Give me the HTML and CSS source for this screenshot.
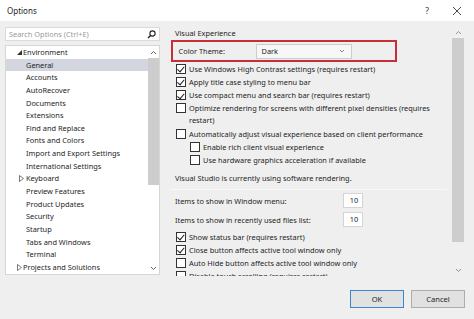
FILE: index.html
```html
<!DOCTYPE html>
<html lang="en">
<head>
    <meta charset="UTF-8">
    <meta name="viewport" content="width=device-width, initial-scale=1.0">
    <title>Options</title>
    <link rel="stylesheet" href="styles.css">
</head>
<body>
    <div class="window">
        <div class="titlebar">
            <span class="title">Options</span>
            <span class="help">?</span>
            <svg class="close" width="10" height="10" viewBox="0 0 10 10"><path d="M1 1 L9 9 M9 1 L1 9" stroke="#333" stroke-width="0.9" fill="none"/></svg>
        </div>

        <div class="main">
            <div class="left">
                <div class="search">
                    <span class="placeholder">Search Options (Ctrl+E)</span>
                    <svg class="search-icon" width="9" height="9" viewBox="0 0 9 9"><circle cx="5.5" cy="3.5" r="2.6" stroke="#222" stroke-width="1.1" fill="none"/><path d="M3.6 5.4 L1 8" stroke="#222" stroke-width="1.4"/></svg>
                </div>

                <div class="tree">
                    <ul class="nodes">
                        <li class="node"><svg class="tri" width="5" height="5" viewBox="0 0 5 5"><path d="M5 0 L5 5 L0 5 Z" fill="#333"/></svg>Environment</li>
                        <li class="leaf selected">General</li>
                        <li class="leaf">Accounts</li>
                        <li class="leaf">AutoRecover</li>
                        <li class="leaf">Documents</li>
                        <li class="leaf">Extensions</li>
                        <li class="leaf">Find and Replace</li>
                        <li class="leaf">Fonts and Colors</li>
                        <li class="leaf">Import and Export Settings</li>
                        <li class="leaf">International Settings</li>
                        <li class="leaf sub"><svg class="tri" width="5" height="7" viewBox="0 0 5 7"><path d="M0.5 0.5 L4.5 3.5 L0.5 6.5 Z" stroke="#555" stroke-width="0.8" fill="none"/></svg>Keyboard</li>
                        <li class="leaf">Preview Features</li>
                        <li class="leaf">Product Updates</li>
                        <li class="leaf">Security</li>
                        <li class="leaf">Startup</li>
                        <li class="leaf">Tabs and Windows</li>
                        <li class="leaf">Terminal</li>
                        <li class="node"><svg class="tri" width="5" height="7" viewBox="0 0 5 7"><path d="M0.5 0.5 L4.5 3.5 L0.5 6.5 Z" stroke="#555" stroke-width="0.8" fill="none"/></svg>Projects and Solutions</li>
                    </ul>
                    <div class="tscroll">
                        <div class="arrow"><svg width="7" height="5" viewBox="0 0 7 5"><path d="M1 4 L3.5 1.5 L6 4" stroke="#666" stroke-width="1" fill="none"/></svg></div>
                        <div class="thumb tree-thumb"></div>
                        <div class="track"></div>
                        <div class="arrow"><svg width="7" height="5" viewBox="0 0 7 5"><path d="M1 1 L3.5 3.5 L6 1" stroke="#666" stroke-width="1" fill="none"/></svg></div>
                    </div>
                </div>
            </div>

            <div class="right">
                <div class="content">
                    <div class="heading">Visual Experience</div>

                    <div class="theme-box">
                        <span class="theme-label">Color Theme:</span>
                        <div class="dropdown">
                            <span>Dark</span>
                            <svg width="6" height="4" viewBox="0 0 6 4"><path d="M1 1 L3 3 L5 1" stroke="#777" stroke-width="0.9" fill="none"/></svg>
                        </div>
                    </div>

                    <div class="check"><span class="box on"></span>Use Windows High Contrast settings (requires restart)</div>
                    <div class="check"><span class="box on"></span>Apply title case styling to menu bar</div>
                    <div class="check"><span class="box on"></span>Use compact menu and search bar (requires restart)</div>
                    <div class="check tall"><span class="box"></span><span>Optimize rendering for screens with different pixel densities (requires restart)</span></div>
                    <div class="check"><span class="box"></span>Automatically adjust visual experience based on client performance</div>
                    <div class="check nested"><span class="box"></span>Enable rich client visual experience</div>
                    <div class="check nested"><span class="box"></span>Use hardware graphics acceleration if available</div>

                    <div class="note">Visual Studio is currently using software rendering.</div>

                    <div class="counts">
                        <div class="count-row"><span>Items to show in Window menu:</span><span class="num">10</span></div>
                        <div class="count-row"><span>Items to show in recently used files list:</span><span class="num">10</span></div>
                    </div>

                    <div class="check"><span class="box on"></span>Show status bar (requires restart)</div>
                    <div class="check"><span class="box on"></span>Close button affects active tool window only</div>
                    <div class="check"><span class="box"></span>Auto Hide button affects active tool window only</div>
                    <div class="check"><span class="box"></span>Disable touch scrolling (requires restart)</div>
                </div>
                <div class="vscroll">
                    <div class="arrow"><svg width="7" height="5" viewBox="0 0 7 5"><path d="M1 4 L3.5 1.5 L6 4" stroke="#888" stroke-width="0.9" fill="none"/></svg></div>
                    <div class="thumb right-thumb"></div>
                    <div class="track"></div>
                    <div class="arrow"><svg width="7" height="5" viewBox="0 0 7 5"><path d="M1 1 L3.5 3.5 L6 1" stroke="#888" stroke-width="0.9" fill="none"/></svg></div>
                </div>
            </div>
        </div>

        <div class="footer">
            <button class="btn primary">OK</button>
            <button class="btn">Cancel</button>
        </div>
    </div>
</body>
</html>
```

FILE: styles.css
```css
body {
    margin: 0;
    font-family: "Noto Sans", "Open Sans", sans-serif;
    font-size: 7.4px;
    color: #1e1e1e;
    background: #efefef;
}

.window {
    width: 474px;
    height: 319px;
    display: flex;
    flex-direction: column;
    background: #efefef;
    overflow: hidden;
}

/* title bar */
.titlebar {
    height: 21px;
    flex: none;
    background: #ffffff;
    display: flex;
    align-items: center;
    padding: 0 12px 0 7px;
}

.title {
    font-size: 8px;
    flex: 1;
    padding-bottom: 1px;
}

.help {
    font-size: 8.5px;
    margin-right: 23px;
    color: #333;
}

/* main area */
.main {
    height: 255px;
    flex: none;
    display: flex;
}

.left {
    width: 155px;
    margin-left: 5px;
    padding-top: 6px;
    display: flex;
    flex-direction: column;
    gap: 4px;
}

.search {
    height: 14px;
    box-sizing: border-box;
    background: #ffffff;
    border: 1px solid #dadada;
    display: flex;
    align-items: center;
    padding: 0 3px 0 3px;
}

.placeholder {
    flex: 1;
    color: #9a9a9a;
}

.tree {
    height: 230px;
    box-sizing: border-box;
    background: #ffffff;
    border: 1px solid #d6d6d6;
    display: flex;
}

.nodes {
    list-style: none;
    margin: 0;
    padding: 0;
    flex: 1;
}

.nodes li {
    height: 12.65px;
    line-height: 12.65px;
    white-space: nowrap;
    display: flex;
    align-items: center;
}

.node {
    padding-left: 11px;
}

.leaf {
    padding-left: 20px;
}

.leaf.sub {
    padding-left: 13px;
}

.tri {
    margin-right: 2px;
}

.node .tri {
    margin-right: 1px;
}

.selected {
    background: #d3d6de;
}

.tscroll {
    width: 11px;
    display: flex;
    flex-direction: column;
}

.arrow {
    height: 12px;
    flex: none;
    display: flex;
    align-items: center;
    justify-content: center;
}

.thumb {
    background: #cdcdcd;
    flex: none;
}

.tree-thumb {
    height: 127px;
}

.track {
    flex: 1;
}

/* right pane */
.right {
    width: 295px;
    margin-left: 10px;
    margin-top: 5px;
    height: 250px;
    display: flex;
}

.content {
    flex: 1;
    overflow: hidden;
}

.heading {
    height: 14px;
    line-height: 14px;
    padding-left: 5px;
}

.theme-box {
    margin-left: 1px;
    width: 226px;
    height: 22px;
    box-sizing: border-box;
    border: 2px solid #c62f38;
    display: flex;
    align-items: center;
    padding-left: 5.5px;
}

.theme-label {
    width: 77px;
}

.dropdown {
    width: 96px;
    height: 15px;
    box-sizing: border-box;
    border: 1px solid #cccccc;
    background: #f7f7f7;
    display: flex;
    align-items: center;
    justify-content: space-between;
    padding: 0 6px 0 5px;
}

.check {
    height: 13.3px;
    display: flex;
    align-items: center;
    padding-left: 6px;
    white-space: nowrap;
}

.check.tall {
    height: 25.3px;
    align-items: flex-start;
    white-space: normal;
    line-height: 12px;
    padding-top: 0.5px;
    box-sizing: border-box;
}

.check.tall .box {
    margin-top: 1px;
}

.check.tall span:last-child {
    width: 255px;
}

.check.nested {
    padding-left: 20px;
}

.box {
    width: 10px;
    height: 10px;
    box-sizing: border-box;
    flex: none;
    border: 1px solid #333333;
    background: #ffffff;
    margin-right: 3px;
    position: relative;
}

.box.on::after {
    content: "";
    position: absolute;
    left: 2.2px;
    top: 0.3px;
    width: 3px;
    height: 5.5px;
    border-right: 1.6px solid #1a1a1a;
    border-bottom: 1.6px solid #1a1a1a;
    transform: rotate(40deg);
}

.note {
    padding: 5px 0 4px 5px;
    height: 13.3px;
    line-height: 13.3px;
    border-bottom: 1px solid #f9f9f9;
    margin-right: 5px;
}

.counts {
    padding-top: 3px;
    display: flex;
    flex-direction: column;
    gap: 4px;
}

.count-row {
    height: 15px;
    display: flex;
    align-items: center;
    padding-left: 5px;
}

.count-row span:first-child {
    width: 168px;
}

.num {
    width: 20px;
    height: 15px;
    box-sizing: border-box;
    background: #ffffff;
    border: 1px solid #d4d4d4;
    line-height: 13px;
    text-align: center;
    padding-left: 2px;
}

.counts + .check {
    margin-top: 2.5px;
}

.vscroll {
    width: 12px;
    margin-right: 1px;
    display: flex;
    flex-direction: column;
}

.right-thumb {
    height: 204px;
}

/* buttons */
.footer {
    flex: 1;
    display: flex;
    justify-content: flex-end;
    align-items: flex-start;
    gap: 7px;
    padding: 14px 9px 0 0;
}

.btn {
    width: 54px;
    height: 18px;
    font-family: inherit;
    font-size: 7.6px;
    color: #1e1e1e;
    background: #e1e1e1;
    border: 1px solid #adadad;
    padding: 0;
}

.btn.primary {
    border: 1.5px solid #3a86cf;
}
```
